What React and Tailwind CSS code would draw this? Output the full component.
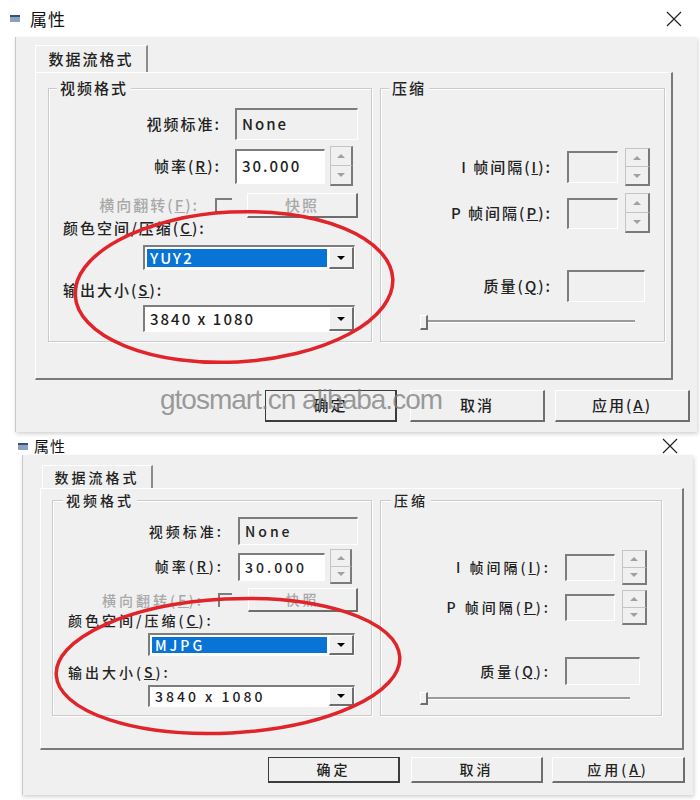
import React from 'react';

const sunken = 'border-t-2 border-l-2 border-r border-b border-t-[#7d7d7d] border-l-[#7d7d7d] border-r-white border-b-white';
const raised = 'border-t border-l border-r-2 border-b-2 border-t-white border-l-white border-r-[#6e6e6e] border-b-[#6e6e6e]';

// the two screenshots differ a little in scale, so each gets its own sizes
const V = {
    top: {
        wrap: 'h-[432px]',
        title: 'h-[37px] pl-[10px] pr-[18px]',
        titleText: 'ml-[10px] text-[17px] tracking-[1px]',
        body: 'ml-[15px] w-[682px] h-[395px] pl-[19px] pt-[8px]',
        text: 'text-[15px] tracking-[2px]',
        tab: 'w-[113px] h-[27px]',
        panel: 'w-[638px] h-[308px] pl-[12px] pt-[15px]',
        group: 'h-[254px]',
        left: 'w-[324px]',
        right: 'w-[285px]',
        legend: '-mt-[11px] leading-[20px] ml-[8px]',
        row1: 'mt-[10px] h-[32px]',
        lab: 'w-[172px]',
        gap: 'ml-[14px]',
        none: 'w-[123px] h-[32px]',
        row2: 'mt-[6px] h-[40px]',
        input: 'w-[90px] h-[35px]',
        spin: 'ml-[5px] w-[23px] h-[40px]',
        row3: 'mt-[7px] h-[25px]',
        lab3: 'w-[150px]',
        check: 'ml-[16px] w-[17px] h-[16px]',
        snap: 'ml-[15px] w-[111px] h-[25px]',
        capC: 'leading-[20px] pl-[14px]',
        dd1: 'mt-[7px] h-[25px] ml-[94px] w-[212px]',
        capS: 'mt-[10px] leading-[20px] pl-[14px]',
        dd2: 'mt-[5px] h-[27px] ml-[94px] w-[212px]',
        rI: 'mt-[50px] h-[38px]',
        rP: 'mt-[7px] h-[40px]',
        rLab: 'w-[171px]',
        rBox: 'ml-[15px] w-[51px]',
        rBoxI: 'h-[32px]',
        rBoxP: 'h-[31px]',
        rSpinI: 'ml-[7px] w-[25px] h-[38px]',
        rSpinP: 'ml-[7px] w-[25px] h-[40px]',
        rQ: 'mt-[37px] h-[32px]',
        rQBox: 'ml-[15px] w-[78px] h-[32px]',
        slider: 'mt-[13px] h-[15px] ml-[39px] w-[215px]',
        thumb: 'h-[15px]',
        buttons: 'mt-[10px] pr-[7px]',
        ok: 'w-[132px] h-[32px]',
        cancel: 'ml-[13px] w-[135px] h-[32px]',
        apply: 'ml-[10px] w-[135px] h-[32px]',
    },
    bottom: {
        wrap: 'mt-[5px] h-[363px]',
        title: 'h-[18px] pl-[18px] pr-[22px]',
        titleText: 'ml-[6px] text-[15px] tracking-[1px]',
        body: 'ml-[22px] w-[671px] h-[340px] pl-[17px] pt-[10px]',
        text: 'text-[14px] tracking-[3px]',
        tab: 'ml-[2px] w-[111px] h-[23px]',
        panel: 'w-[644px] h-[262px] pl-[11px] pt-[11px]',
        group: 'h-[216px]',
        left: 'w-[320px]',
        right: 'w-[282px]',
        legend: '-mt-[10px] leading-[18px] ml-[10px]',
        row1: 'mt-[8px] h-[28px]',
        lab: 'w-[171px]',
        gap: 'ml-[14px]',
        none: 'w-[120px] h-[28px]',
        row2: 'mt-[4px] h-[35px]',
        input: 'w-[87px] h-[28px]',
        spin: 'ml-[5px] w-[22px] h-[35px]',
        row3: 'mt-[4px] h-[24px]',
        lab3: 'w-[151px]',
        check: 'ml-[14px] w-[14px] h-[14px]',
        snap: 'ml-[16px] w-[110px] h-[24px]',
        capC: 'leading-[16px] pl-[15px]',
        dd1: 'mt-[5px] h-[23px] ml-[95px] w-[207px]',
        capS: 'mt-[8px] leading-[16px] pl-[15px]',
        dd2: 'mt-[5px] h-[22px] ml-[95px] w-[207px]',
        rI: 'mt-[41px] h-[35px]',
        rP: 'mt-[5px] h-[35px]',
        rLab: 'w-[170px]',
        rBox: 'ml-[14px] w-[50px]',
        rBoxI: 'h-[27px]',
        rBoxP: 'h-[27px]',
        rSpinI: 'ml-[7px] w-[25px] h-[35px]',
        rSpinP: 'ml-[7px] w-[25px] h-[35px]',
        rQ: 'mt-[32px] h-[28px]',
        rQBox: 'ml-[14px] w-[75px] h-[28px]',
        slider: 'mt-[7px] h-[13px] ml-[39px] w-[210px]',
        thumb: 'h-[13px]',
        buttons: 'mt-[7px] pr-[8px]',
        ok: 'w-[132px] h-[26px]',
        cancel: 'ml-[11px] w-[132px] h-[26px]',
        apply: 'ml-[9px] w-[133px] h-[26px]',
    },
};

function Spin({ className }) {
    return (
        <div className={`flex flex-col ${className}`}>
            <div className="flex-1 flex items-center justify-center border border-[#c4c4c4] border-r-2 border-r-[#7a7a7a] bg-[#f0f0f0]">
                <div className="w-0 h-0 border-x-[4px] border-x-transparent border-b-[4px] border-b-[#a0a0a0]" />
            </div>
            <div className="flex-1 flex items-center justify-center border border-t-0 border-[#c4c4c4] border-r-2 border-r-[#7a7a7a] border-b-2 border-b-[#7a7a7a] bg-[#f0f0f0]">
                <div className="w-0 h-0 border-x-[4px] border-x-transparent border-t-[4px] border-t-[#a0a0a0]" />
            </div>
        </div>
    );
}

function Dropdown({ className, value, selected }) {
    return (
        <div className={`flex bg-white ${sunken} ${className}`}>
            <div className="flex-1 flex p-[2px]">
                <div className={`flex-1 flex items-center pl-[3px] ${selected ? 'bg-[#0a74d6] text-white' : 'text-[#1e1e1e]'}`}>
                    {value}
                </div>
            </div>
            <div className={`w-[25px] flex items-center justify-center bg-[#f0f0f0] ${raised}`}>
                <div className="w-0 h-0 border-x-[4px] border-x-transparent border-t-[4px] border-t-black" />
            </div>
        </div>
    );
}

function Button({ className, children, isDefault }) {
    return (
        <div className={`flex items-center justify-center bg-[#f0f0f0] ${isDefault ? 'border border-[#3c3c3c] border-r-2 border-b-2' : raised} ${className}`}>
            {children}
        </div>
    );
}

function Dialog({ v, colorspace }) {
    const s = V[v];
    return (
        <div className={`flex flex-col ${s.wrap}`}>
            <div className={`flex items-center justify-between bg-white ${s.title}`}>
                <div className="flex items-center">
                    <div className="w-[10px] h-[7px] bg-[#8aa2bd] border-t-2 border-[#34507a]" />
                    <span className={`text-[#111] ${s.titleText}`}>属性</span>
                </div>
                <svg width="16" height="16" viewBox="0 0 16 16">
                    <path d="M1 1 L15 15 M15 1 L1 15" stroke="#222" strokeWidth="1.2" />
                </svg>
            </div>
            <div className={`bg-[#f0f0f0] border-l border-[#c8c8c8] shadow-[1px_2px_4px_rgba(0,0,0,0.18)] text-[#222] font-medium ${s.body} ${s.text}`}>
                <div className={`flex items-center justify-center border-t border-l border-white border-r-2 border-r-[#8c8c8c] ${s.tab}`}>
                    数据流格式
                </div>
                <div className={`flex gap-[8px] border-t border-l border-white border-r-2 border-b-2 border-r-[#7a7a7a] border-b-[#7a7a7a] ${s.panel}`}>
                    <div className={`flex flex-col border border-[#cacaca] shadow-[inset_1px_1px_0_#ffffff,1px_1px_0_#ffffff] ${s.group} ${s.left}`}>
                        <span className={`self-start px-[3px] bg-[#f0f0f0] ${s.legend}`}>视频格式</span>
                        <div className={`flex items-center ${s.row1}`}>
                            <span className={`text-right ${s.lab}`}>视频标准:</span>
                            <div className={`flex items-center pl-[5px] bg-[#f0f0f0] ${sunken} ${s.gap} ${s.none}`}>None</div>
                        </div>
                        <div className={`flex items-center ${s.row2}`}>
                            <span className={`text-right ${s.lab}`}>帧率(<span className="underline">R</span>):</span>
                            <div className={`flex items-center pl-[5px] bg-white ${sunken} ${s.gap} ${s.input}`}>30.000</div>
                            <Spin className={s.spin} />
                        </div>
                        <div className={`flex items-center ${s.row3}`}>
                            <span className={`text-right text-[#a8a8a8] ${s.lab3}`}>横向翻转(<span className="underline">F</span>):</span>
                            <div className={`border-t-2 border-l-2 border-[#7d7d7d] ${s.check}`} />
                            <div className={`flex items-center justify-center text-[#a8a8a8] ${raised} ${s.snap}`}>快照</div>
                        </div>
                        <span className={s.capC}>颜色空间/压缩(<span className="underline">C</span>):</span>
                        <Dropdown className={s.dd1} value={colorspace} selected />
                        <span className={s.capS}>输出大小(<span className="underline">S</span>):</span>
                        <Dropdown className={s.dd2} value="3840 x 1080" />
                    </div>
                    <div className={`flex flex-col border border-[#cacaca] shadow-[inset_1px_1px_0_#ffffff,1px_1px_0_#ffffff] ${s.group} ${s.right}`}>
                        <span className={`self-start px-[3px] bg-[#f0f0f0] ${s.legend}`}>压缩</span>
                        <div className={`flex items-center ${s.rI}`}>
                            <span className={`text-right ${s.rLab}`}>I 帧间隔(<span className="underline">I</span>):</span>
                            <div className={`bg-[#f0f0f0] ${sunken} ${s.rBox} ${s.rBoxI}`} />
                            <Spin className={s.rSpinI} />
                        </div>
                        <div className={`flex items-center ${s.rP}`}>
                            <span className={`text-right ${s.rLab}`}>P 帧间隔(<span className="underline">P</span>):</span>
                            <div className={`bg-[#f0f0f0] ${sunken} ${s.rBox} ${s.rBoxP}`} />
                            <Spin className={s.rSpinP} />
                        </div>
                        <div className={`flex items-center ${s.rQ}`}>
                            <span className={`text-right ${s.rLab}`}>质量(<span className="underline">Q</span>):</span>
                            <div className={`bg-[#f0f0f0] ${sunken} ${s.rQBox}`} />
                        </div>
                        <div className={`flex items-start ${s.slider}`}>
                            <div className={`w-[8px] border-l border-t border-white border-r-2 border-b-2 border-r-[#6e6e6e] border-b-[#6e6e6e] ${s.thumb}`} />
                            <div className="flex-1 mt-[5px] h-[3px] border-t-2 border-[#9a9a9a] border-b border-b-white" />
                        </div>
                    </div>
                </div>
                <div className={`flex justify-end ${s.buttons}`}>
                    <Button className={s.ok} isDefault>确定</Button>
                    <Button className={s.cancel}>取消</Button>
                    <Button className={s.apply}>应用(<span className="underline">A</span>)</Button>
                </div>
            </div>
        </div>
    );
}

export default function App() {
    return (
        <div className="relative w-[700px] h-[800px] bg-white overflow-hidden font-['Noto_Sans_CJK_SC','Liberation_Sans',sans-serif]">
            <Dialog v="top" colorspace="YUY2" />
            <Dialog v="bottom" colorspace="MJPG" />
            <div className="absolute left-[160px] top-[386px] text-[28px] leading-[28px] tracking-[-1px] text-[#7c7c7c]/75 font-['Liberation_Sans',sans-serif] pointer-events-none">
                gtosmart.cn alibaba.com
            </div>
            <svg className="absolute inset-0 pointer-events-none" width="700" height="800" viewBox="0 0 700 800">
                <ellipse cx="234" cy="287" rx="159" ry="75" transform="rotate(-3 234 287)" fill="none" stroke="#e0242a" strokeWidth="3.5" />
                <ellipse cx="228" cy="666" rx="172" ry="67" transform="rotate(-3 228 666)" fill="none" stroke="#e0242a" strokeWidth="3.5" />
            </svg>
        </div>
    );
}
